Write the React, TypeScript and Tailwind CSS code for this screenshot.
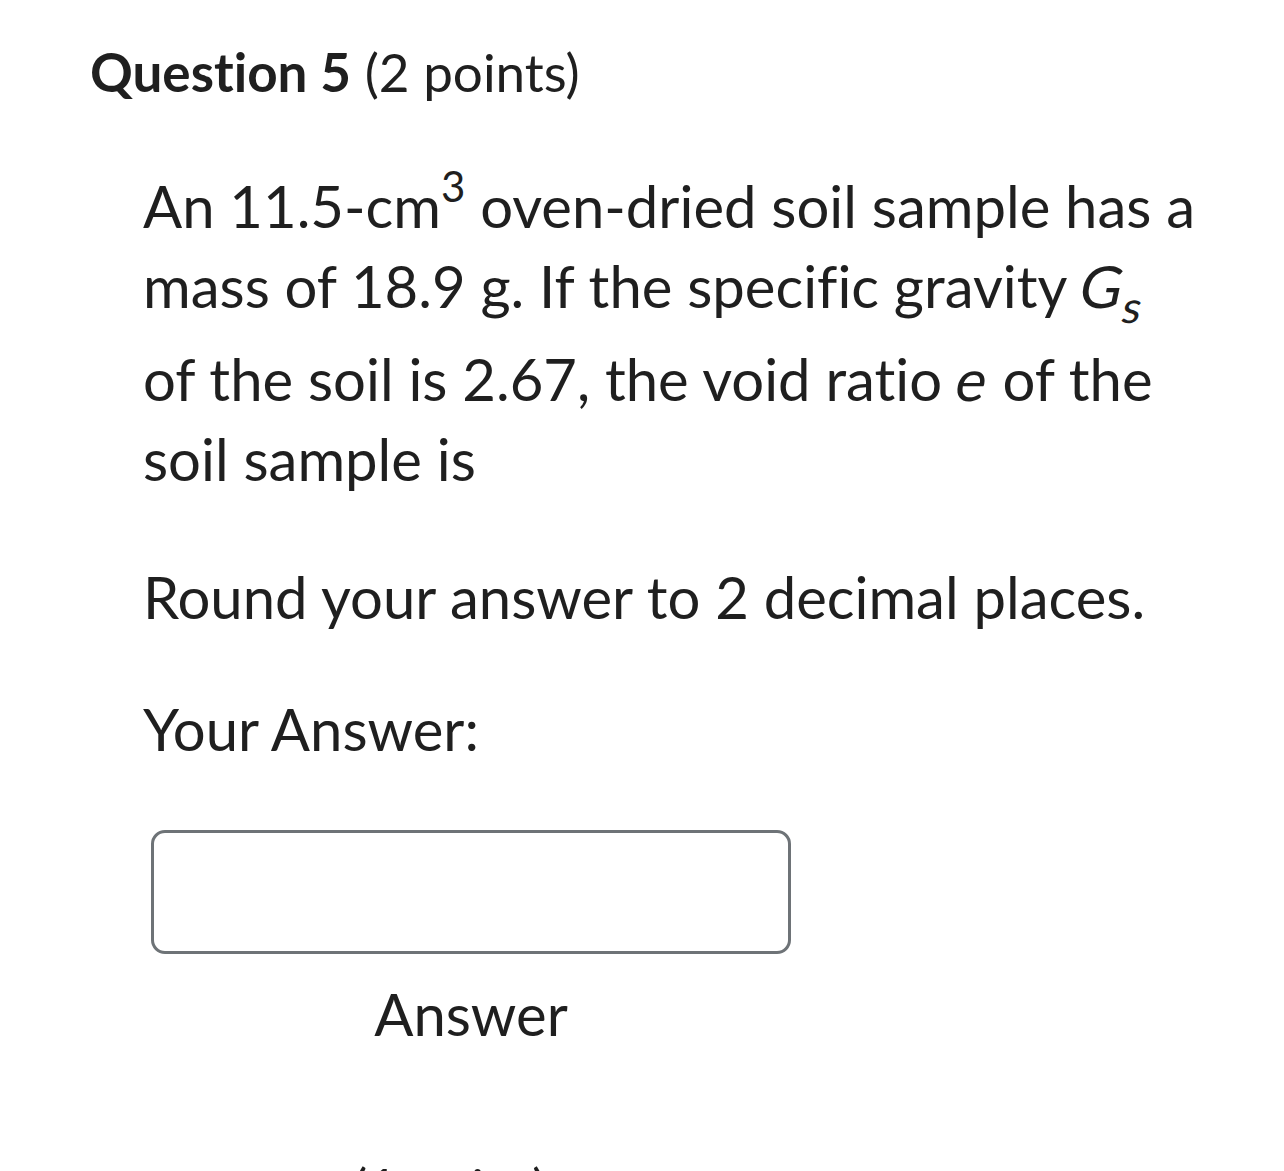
import React from 'react';

export default function App() {
  return (
    <div className="min-h-[1171px] w-[1284px] overflow-hidden bg-white text-[#1f1f1f] [font-family:Lato,'Noto_Sans',sans-serif] [font-variant-ligatures:none]">
      <div className="pl-[90px] pt-[40px]">
        <h1 className="text-[53px] leading-[64px]">
          <span className="font-bold">Question 5</span> (2 points)
        </h1>
      </div>

      <div className="pl-[143px] pt-[62px]">
        <p className="w-[1056px] text-[58px] leading-[80px]">
          An 11.5-cm<sup className="text-[42px] -top-[26px]">3</sup> oven-dried soil sample has a mass of 18.9 g. If the
          specific gravity <span className="inline-block -skew-x-12">G</span>
          <sub className="inline-block -skew-x-12 text-[44px] align-[-15px] leading-[65px] bottom-0">s</sub> of the soil is 2.67, the
          void ratio <span className="inline-block -skew-x-12">e</span> of the soil sample is
        </p>

        <p className="text-[58px] leading-[80px] mt-[58px]">Round your answer to 2 decimal places.</p>

        <p className="text-[58px] leading-[80px] mt-[52px]">Your Answer:</p>

        <div className="mt-[61px] ml-[8px] w-[640px] flex flex-col items-center">
          <input
            type="text"
            aria-label="Your Answer"
            className="w-[640px] h-[124px] rounded-[14px] border-[3px] border-[#6e7377] bg-white outline-none"
          />
          <span className="mt-[28px] text-[58px] leading-[64px]">Answer</span>
        </div>

        <div className="mt-[109px] ml-[210px] text-[53px] leading-[64px]">(1 point)</div>
      </div>
    </div>
  );
}
